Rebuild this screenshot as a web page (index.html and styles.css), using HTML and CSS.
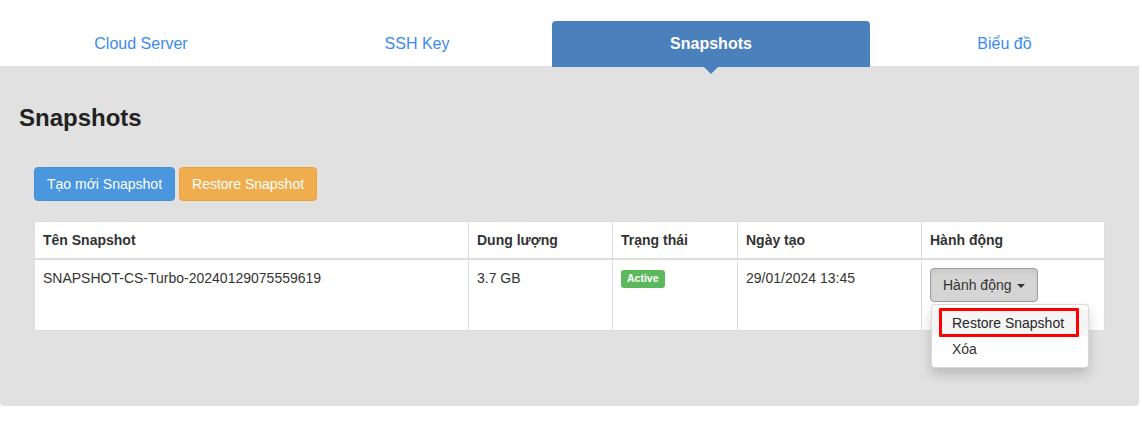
FILE: index.html
```html
<!DOCTYPE html>
<html lang="vi">
<head>
<meta charset="utf-8">
<title>Snapshots</title>
<link rel="stylesheet" href="styles.css">
</head>
<body>
<div class="page">
  <nav class="tabs">
    <a class="tab">Cloud Server</a>
    <a class="tab">SSH Key</a>
    <a class="tab active">Snapshots</a>
    <a class="tab">Biểu đồ</a>
  </nav>
  <section class="panel">
    <h2 class="title">Snapshots</h2>
    <div class="content">
      <div class="toolbar">
        <button class="btn btn-primary">Tạo mới Snapshot</button>
        <button class="btn btn-warning">Restore Snapshot</button>
      </div>
      <table class="grid">
        <colgroup>
          <col class="c1"><col class="c2"><col class="c3"><col class="c4"><col class="c5">
        </colgroup>
        <thead>
          <tr>
            <th>Tên Snapshot</th>
            <th>Dung lượng</th>
            <th>Trạng thái</th>
            <th>Ngày tạo</th>
            <th>Hành động</th>
          </tr>
        </thead>
        <tbody>
          <tr>
            <td>SNAPSHOT-CS-Turbo-20240129075559619</td>
            <td>3.7 GB</td>
            <td><span class="label">Active</span></td>
            <td>29/01/2024 13:45</td>
            <td>
              <div class="btn-group">
                <button class="btn btn-default">Hành động <span class="caret"></span></button>
                <ul class="menu">
                  <li class="item hover">Restore Snapshot<span class="mark"></span></li>
                  <li class="item">Xóa</li>
                </ul>
              </div>
            </td>
          </tr>
        </tbody>
      </table>
    </div>
  </section>
</div>
</body>
</html>
```
FILE: styles.css
```css
* { box-sizing: border-box; }
body {
  margin: 0;
  background: #fff;
  font-family: "Liberation Sans", Arial, sans-serif;
  font-size: 14px;
  line-height: 20px;
  color: #333;
}
.page { width: 1139px; }

.tabs {
  display: grid;
  grid-template-columns: 282fr 270fr 318fr 269fr;
  padding-top: 21px;
  margin-bottom: -1px;
  position: relative;
  z-index: 1;
}
.tab {
  display: block;
  padding: 13px 0;
  text-align: center;
  font-size: 16px;
  line-height: 20px;
  color: #3b8bec;
  border-radius: 4px 4px 0 0;
  position: relative;
}
.tab.active {
  background: #4a80bb;
  color: #fff;
  font-weight: bold;
}
.tab.active::after {
  content: "";
  position: absolute;
  left: 50%;
  bottom: -7px;
  margin-left: -7px;
  border-left: 7px solid transparent;
  border-right: 7px solid transparent;
  border-top: 7px solid #4a80bb;
}

.panel {
  background: #e1e1e1;
  border-radius: 0 0 4px 4px;
  padding: 0 0 75px 0;
}
.title {
  margin: 0;
  padding: 39px 0 0 19px;
  font-size: 24px;
  line-height: 26px;
  font-weight: bold;
  color: #222;
}
.content { padding: 36px 34px 0 34px; }

.toolbar {
  display: flex;
  gap: 4px;
  margin-bottom: 20px;
}
.btn {
  font-family: inherit;
  font-size: 14px;
  line-height: 20px;
  padding: 6px 12px;
  border: 1px solid transparent;
  border-radius: 4px;
  cursor: pointer;
  height: 34px;
}
.btn-primary { background: #4a97df; border-color: #4490d8; color: #fff; }
.btn-warning { background: #f0ad4e; border-color: #eea236; color: #fff; }
.btn-default {
  background: #d5d5d5;
  border-color: #9e9e9e;
  color: #333;
  box-shadow: inset 0 3px 5px rgba(0,0,0,.06);
}
.caret {
  display: inline-block;
  width: 0;
  height: 0;
  margin-left: 2px;
  vertical-align: middle;
  border-top: 4px solid #333;
  border-left: 4px solid transparent;
  border-right: 4px solid transparent;
}

.grid {
  width: 100%;
  table-layout: fixed;
  border-collapse: collapse;
  background: #fff;
  border: 1px solid #ddd;
}
.c1 { width: 434px; }
.c2 { width: 144px; }
.c3 { width: 125px; }
.c4 { width: 184px; }
.c5 { width: auto; }
.grid th, .grid td {
  padding: 8px;
  text-align: left;
  vertical-align: top;
  border: 1px solid #ddd;
  line-height: 20px;
}
.grid th { font-weight: bold; color: #333; border-bottom: 2px solid #ddd; }
.grid td { color: #333; }

.label {
  display: inline-block;
  margin-top: 2px;
  padding: 3px 6px 4px;
  font-size: 10.5px;
  line-height: 11px;
  font-weight: bold;
  color: #fff;
  background: #5cb85c;
  border-radius: 3px;
  vertical-align: top;
}

.btn-group {
  position: relative;
  display: inline-block;
  margin-bottom: 20px;
}
.menu {
  position: absolute;
  top: 100%;
  left: 1px;
  margin: 2px 0 0;
  padding: 5px 0;
  list-style: none;
  width: 158px;
  background: #fff;
  border: 1px solid rgba(0,0,0,.15);
  border-radius: 4px;
  box-shadow: 0 6px 12px rgba(0,0,0,.175);
  z-index: 5;
}
.item {
  position: relative;
  padding: 3px 20px;
  line-height: 20px;
  color: #333;
  white-space: nowrap;
}
.item.hover { background: #f5f5f5; color: #262626; }
.mark {
  position: absolute;
  left: 7px;
  right: 9px;
  top: -2px;
  bottom: -1px;
  border: 3px solid #f00;
  border-radius: 1px;
}
```
